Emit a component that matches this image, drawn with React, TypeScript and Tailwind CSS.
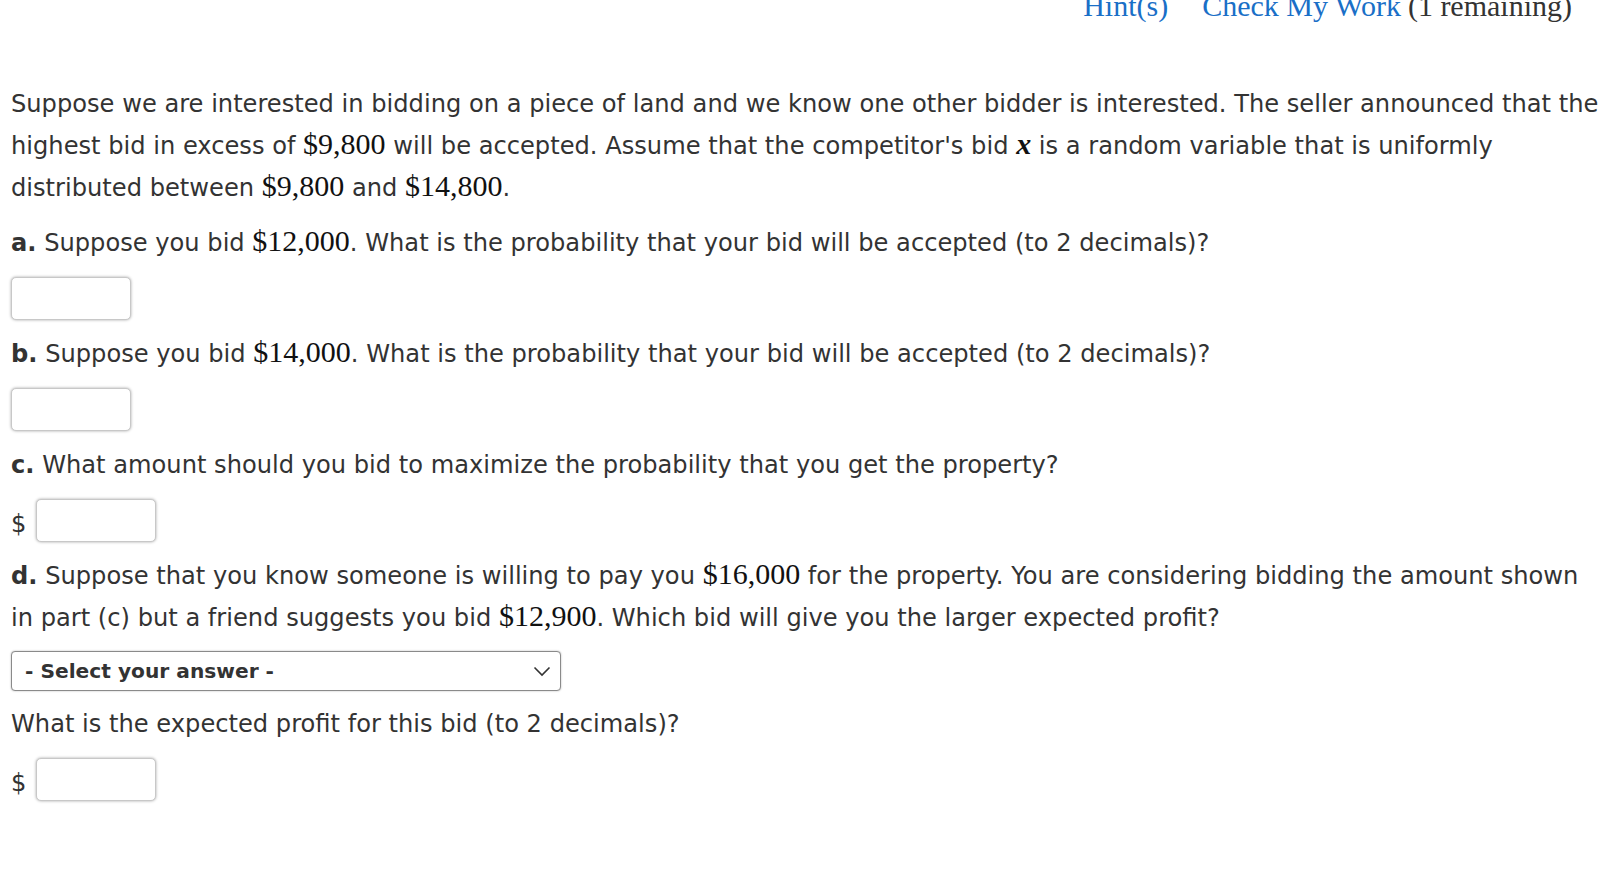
import React from "react";

const M = ({ children }: { children: React.ReactNode }) => (
  <span className="font-['Liberation_Serif',serif] text-[30px] leading-none text-[#111]">{children}</span>
);

const Box = ({ dollar }: { dollar?: boolean }) => (
  <div className="flex items-center h-[43px] my-[13px]">
    {dollar && <span className="mr-[10px] mt-[6px] leading-[30px]">$</span>}
    <div className="w-[120px] h-[43px] rounded-[5px] border border-[#c8c8c8] bg-white shadow-[0_0_3px_rgba(0,0,0,0.35)]" />
  </div>
);

export default function App() {
  return (
    <div className="min-h-screen bg-white text-[#333] font-['DejaVu_Sans','Verdana',sans-serif] text-[24.15px] leading-[42px] pl-[11px] pr-[8px]">
      <div className="flex justify-end pr-[35px] -mt-[14px] h-[40px] font-['Liberation_Serif',serif] text-[30px] leading-[40px]">
        <span className="text-[#1a6fc7]">Hint(s)</span>
        <span className="ml-[34px] text-[#1a6fc7]">Check My Work</span>
        <span className="ml-[7px] text-[#333]">(1 remaining)</span>
      </div>

      <p className="mt-[57px]">
        Suppose we are interested in bidding on a piece of land and we know one other bidder is interested. The seller
        announced that the highest bid in excess of <M>$9,800</M> will be accepted. Assume that the competitor's bid{" "}
        <M><i className="font-bold">x</i></M> is a random variable that is uniformly distributed between <M>$9,800</M> and{" "}
        <M>$14,800</M>.
      </p>

      <p className="mt-[13px]">
        <b>a.</b> Suppose you bid <M>$12,000</M>. What is the probability that your bid will be accepted (to 2 decimals)?
      </p>
      <Box />

      <p>
        <b>b.</b> Suppose you bid <M>$14,000</M>. What is the probability that your bid will be accepted (to 2 decimals)?
      </p>
      <Box />

      <p>
        <b>c.</b> What amount should you bid to maximize the probability that you get the property?
      </p>
      <Box dollar />

      <p>
        <b>d.</b> Suppose that you know someone is willing to pay you <M>$16,000</M> for the property. You are considering
        bidding the amount shown in part (c) but a friend suggests you bid <M>$12,900</M>. Which bid will give you the larger
        expected profit?
      </p>

      <div className="my-[12px] w-[550px] h-[40px] rounded-[4px] border border-[#8a8a8a] shadow-[0_0_2px_rgba(0,0,0,0.3)] bg-white flex items-center justify-between pl-[13px] pr-[9px]">
        <span className="font-bold text-[20.2px] text-[#333]">- Select your answer -</span>
        <svg width="18" height="12" viewBox="0 0 18 12" fill="none" stroke="#333" strokeWidth="1.6">
          <path d="M1.5 2.5 L9 10 L16.5 2.5" />
        </svg>
      </div>

      <p>What is the expected profit for this bid (to 2 decimals)?</p>
      <Box dollar />
    </div>
  );
}
